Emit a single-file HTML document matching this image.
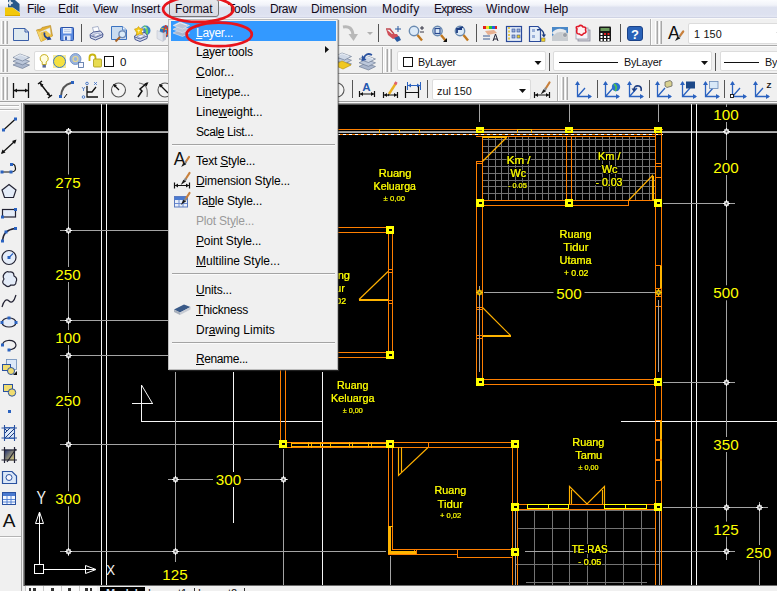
<!DOCTYPE html>
<html><head><meta charset="utf-8"><title>AutoCAD - Format menu</title>
<style>
html,body{margin:0;padding:0}
body{width:777px;height:591px;overflow:hidden;position:relative;background:#f0f0f0;font-family:"Liberation Sans",sans-serif;font-size:12px;color:#000}
svg{position:absolute;left:0;top:0}
svg text{font-family:"Liberation Sans",sans-serif}
#menubar{position:absolute;left:0;top:0;width:777px;height:18px;background:linear-gradient(#fbfcfe 0,#f1f3f9 28%,#dde1ef 42%,#dde1f0 80%,#e4e7f3 94%,#cfd3e4 95%,#cfd3e4 100%);border-bottom:1px solid #fbfbfd}
#menubar span{position:absolute;top:2px;line-height:14px;white-space:nowrap;color:#100818}
#fmt{position:absolute;left:169px;top:-1px;width:48px;height:16px;border:1px solid #777;border-radius:3px;background:linear-gradient(#e6e6ea,#d8d9e2)}
.tb{position:absolute;left:0;width:777px;height:27px;background:#f0f0f0}
.sepline{position:absolute;left:0;width:777px;height:1px}
.combo{position:absolute;height:20px;background:#fff;border:1px solid #dcdcdc;border-radius:2px;box-sizing:border-box}
.combo span{position:absolute;top:3px;line-height:14px;font-size:10.8px;white-space:nowrap;color:#111;letter-spacing:-0.25px}
#menu{position:absolute;left:168px;top:19px;width:168px;height:349px;background:#f0f0f0;border:1px solid #bdbdbd;box-sizing:content-box;box-shadow:1px 1px 1px rgba(60,60,60,.55)}
#menu div.i{position:absolute;left:27px;height:20px;line-height:20px;white-space:nowrap;color:#000}
#menu div.i.dis{color:#9a9a9a}
#menu div.sep{position:absolute;left:3px;width:163px;height:1px;background:#a4a4a4;border-bottom:1px solid #fbfbfb}
#menu u{text-decoration:underline;text-underline-offset:1px}
#hl{position:absolute;left:2px;top:1px;width:165px;height:20px;background:#3399ff}
#tabs{position:absolute;left:24px;top:585px;width:753px;height:6px;background:#f0f0f0;overflow:hidden;font-size:11px;border-top:1px solid #6a6a6a;box-sizing:border-box}
#tabs i{position:absolute;top:0;width:17px;height:6px;background:#fafafa;border-left:1px solid #c8c8c8}
#tabs b{position:absolute;top:2px;height:4px;background:#333}
#tabs span{position:absolute;top:1px;line-height:12px;color:#111}
#palette{position:absolute;left:0;top:103px;width:21px;height:488px;background:#f0f0f0;border-right:1px solid #a6a6a6}
</style></head>
<body>
<div class="tb" style="top:19px"></div>
<div class="tb" style="top:47px"></div>
<div class="tb" style="top:75px;height:28px"></div>
<div id="palette"></div>
<div id="tabs"><i style="left:1px"></i><i style="left:19px"></i><i style="left:37px"></i><i style="left:55px"></i><b style="left:5px;width:2px"></b><b style="left:9px;width:3px"></b><b style="left:27px;width:3px"></b><b style="left:44px;width:3px"></b><b style="left:61px;width:3px"></b><b style="left:66px;width:2px"></b><b style="left:120px;width:1px"></b><b style="left:170px;width:1px"></b><b style="left:220px;width:1px"></b><span style="left:76px;background:#000;color:#cde;width:45px;height:12px;font-weight:bold">&nbsp;&nbsp;Model</span><span style="left:124px">Layout1</span><span style="left:174px">Layout2</span></div>
<svg width="777" height="591" viewBox="0 0 777 591">
<rect x="24" y="104" width="753" height="481" fill="#000" stroke="none" stroke-width="1" />
<rect x="23" y="103" width="754" height="1" fill="#9a9a9a"/><rect x="23" y="103" width="1" height="483" fill="#8c8c8c"/><rect x="24" y="104" width="753" height="1" fill="#555"/><rect x="24" y="104" width="1" height="482" fill="#555"/>
<clipPath id="cv"><rect x="24" y="104" width="753" height="481"/></clipPath>
<g clip-path="url(#cv)">
<rect x="488" y="137" width="1" height="63" fill="#737373"/>
<rect x="495" y="137" width="1" height="63" fill="#737373"/>
<rect x="501" y="137" width="1" height="63" fill="#737373"/>
<rect x="508" y="137" width="1" height="63" fill="#737373"/>
<rect x="515" y="137" width="1" height="63" fill="#737373"/>
<rect x="522" y="137" width="1" height="63" fill="#737373"/>
<rect x="528" y="137" width="1" height="63" fill="#737373"/>
<rect x="535" y="137" width="1" height="63" fill="#737373"/>
<rect x="542" y="137" width="1" height="63" fill="#737373"/>
<rect x="548" y="137" width="1" height="63" fill="#737373"/>
<rect x="555" y="137" width="1" height="63" fill="#737373"/>
<rect x="562" y="137" width="1" height="63" fill="#737373"/>
<rect x="575" y="137" width="1" height="63" fill="#737373"/>
<rect x="582" y="137" width="1" height="63" fill="#737373"/>
<rect x="589" y="137" width="1" height="63" fill="#737373"/>
<rect x="595" y="137" width="1" height="63" fill="#737373"/>
<rect x="602" y="137" width="1" height="63" fill="#737373"/>
<rect x="609" y="137" width="1" height="63" fill="#737373"/>
<rect x="615" y="137" width="1" height="63" fill="#737373"/>
<rect x="622" y="137" width="1" height="63" fill="#737373"/>
<rect x="629" y="137" width="1" height="63" fill="#737373"/>
<rect x="635" y="137" width="1" height="63" fill="#737373"/>
<rect x="642" y="137" width="1" height="63" fill="#737373"/>
<rect x="649" y="137" width="1" height="63" fill="#737373"/>
<rect x="483" y="139" width="172" height="1" fill="#737373"/>
<rect x="483" y="146" width="172" height="1" fill="#737373"/>
<rect x="483" y="152" width="172" height="1" fill="#737373"/>
<rect x="483" y="159" width="172" height="1" fill="#737373"/>
<rect x="483" y="166" width="172" height="1" fill="#737373"/>
<rect x="483" y="173" width="172" height="1" fill="#737373"/>
<rect x="483" y="180" width="172" height="1" fill="#737373"/>
<rect x="483" y="186" width="172" height="1" fill="#737373"/>
<rect x="483" y="193" width="172" height="1" fill="#737373"/>
<rect x="483" y="200" width="172" height="1" fill="#737373"/>
<rect x="534" y="510" width="1" height="76" fill="#737373"/>
<rect x="552" y="510" width="1" height="76" fill="#737373"/>
<rect x="569" y="510" width="1" height="76" fill="#737373"/>
<rect x="587" y="510" width="1" height="76" fill="#737373"/>
<rect x="605" y="510" width="1" height="76" fill="#737373"/>
<rect x="623" y="510" width="1" height="76" fill="#737373"/>
<rect x="641" y="510" width="1" height="76" fill="#737373"/>
<rect x="518" y="510" width="138" height="1" fill="#737373"/>
<rect x="518" y="528" width="138" height="1" fill="#737373"/>
<rect x="516" y="564" width="143" height="1" fill="#737373"/>
<rect x="526" y="582" width="121" height="1" fill="#737373"/>
<rect x="101" y="104" width="1" height="482" fill="#f6f6f6"/>
<rect x="106" y="104" width="1" height="482" fill="#f6f6f6"/>
<rect x="691" y="104" width="1" height="482" fill="#f6f6f6"/>
<rect x="696" y="104" width="1" height="482" fill="#f6f6f6"/>
<rect x="24" y="131.4" width="753" height="1.3" fill="#fff"/>
<rect x="141" y="421" width="182" height="1" fill="#f6f6f6"/>
<rect x="621" y="421" width="156" height="1" fill="#f6f6f6"/>
<rect x="141" y="385" width="1" height="36" fill="#f6f6f6"/>
<rect x="132" y="403" width="21" height="1" fill="#f6f6f6"/>
<path d="M141.5 385L152.5 403.5" stroke="#f4f4f4" stroke-width="1" fill="none"/>
<rect x="233" y="372" width="1" height="151" fill="#f6f6f6"/>
<rect x="322" y="372" width="1" height="214" fill="#f6f6f6"/>
<rect x="68" y="128" width="1" height="428" fill="#a4a4a4"/>
<rect x="60" y="230" width="270" height="1" fill="#a4a4a4"/>
<rect x="60" y="320" width="270" height="1" fill="#a4a4a4"/>
<rect x="60" y="355" width="270" height="1" fill="#a4a4a4"/>
<rect x="60" y="444" width="220" height="1" fill="#a4a4a4"/>
<rect x="60" y="551" width="326" height="1" fill="#a4a4a4"/>
<rect x="168" y="479" width="120" height="1" fill="#a4a4a4"/>
<rect x="175" y="372" width="1" height="190" fill="#a4a4a4"/>
<rect x="283" y="449" width="1" height="137" fill="#a4a4a4"/>
<rect x="390" y="556" width="1" height="30" fill="#a4a4a4"/>
<rect x="726" y="104" width="1" height="456" fill="#a4a4a4"/>
<rect x="759" y="502" width="1" height="84" fill="#a4a4a4"/>
<rect x="663" y="203" width="72" height="1" fill="#a4a4a4"/>
<rect x="663" y="382" width="72" height="1" fill="#a4a4a4"/>
<rect x="663" y="507" width="105" height="1" fill="#a4a4a4"/>
<rect x="525" y="551" width="210" height="1" fill="#a4a4a4"/>
<rect x="484" y="292" width="171" height="1" fill="#a4a4a4"/>
<rect x="479" y="104" width="1" height="18" fill="#a4a4a4"/>
<rect x="569" y="104" width="1" height="18" fill="#a4a4a4"/>
<rect x="658" y="104" width="1" height="18" fill="#a4a4a4"/>
<rect x="283" y="129" width="380" height="1" fill="#ff7f00"/>
<path d="M283 134.5H663" stroke="#ff7f00" stroke-width="1" shape-rendering="crispEdges"/>
<path d="M283 134.5H663" stroke="#fff" stroke-width="1" stroke-dasharray="3 3" shape-rendering="crispEdges"/>
<rect x="476" y="136" width="180" height="1" fill="#ff7f00"/>
<rect x="379" y="129" width="41" height="1" fill="#ffb400"/>
<rect x="379" y="129" width="1" height="4" fill="#ffb400"/>
<rect x="399" y="129" width="1" height="4" fill="#ffb400"/>
<rect x="419" y="129" width="1" height="4" fill="#ffb400"/>
<rect x="517" y="129" width="1" height="4" fill="#ffb400"/>
<rect x="531" y="129" width="1" height="4" fill="#ffb400"/>
<rect x="517" y="129" width="15" height="1" fill="#ffb400"/>
<rect x="476" y="161" width="1" height="221" fill="#ff7f00"/>
<rect x="482" y="136" width="1" height="246" fill="#ff7f00"/>
<rect x="566" y="136" width="1" height="64" fill="#ff7f00"/>
<rect x="571" y="136" width="1" height="64" fill="#ff7f00"/>
<rect x="655" y="131" width="1" height="455" fill="#ff7f00"/>
<rect x="661" y="131" width="1" height="455" fill="#ff7f00"/>
<rect x="482" y="200" width="173" height="1" fill="#ff7f00"/>
<rect x="482" y="205" width="146" height="1" fill="#ff7f00"/>
<rect x="628" y="200" width="1" height="6" fill="#ff7f00"/>
<rect x="652" y="176" width="2" height="25" fill="#ffb400"/>
<rect x="283" y="227" width="110" height="1" fill="#ff7f00"/>
<rect x="283" y="232" width="110" height="1" fill="#ff7f00"/>
<rect x="388" y="232" width="1" height="120" fill="#ff7f00"/>
<rect x="392" y="232" width="1" height="120" fill="#ff7f00"/>
<rect x="283" y="352" width="110" height="1" fill="#ff7f00"/>
<rect x="283" y="357" width="110" height="1" fill="#ff7f00"/>
<rect x="476" y="379" width="186" height="1" fill="#ff7f00"/>
<rect x="476" y="384" width="186" height="1" fill="#ff7f00"/>
<rect x="280" y="131" width="1" height="311" fill="#ff7f00"/>
<rect x="285" y="131" width="1" height="311" fill="#ff7f00"/>
<rect x="280" y="442" width="238" height="1" fill="#ff7f00"/>
<rect x="280" y="447" width="238" height="1" fill="#ff7f00"/>
<rect x="392" y="447" width="1" height="103" fill="#ff7f00"/>
<rect x="388" y="447" width="1" height="108" fill="#ff7f00"/>
<rect x="512" y="447" width="1" height="139" fill="#ff7f00"/>
<rect x="517" y="447" width="1" height="139" fill="#ff7f00"/>
<rect x="517" y="504" width="139" height="1" fill="#ff7f00"/>
<rect x="517" y="509" width="139" height="1" fill="#ff7f00"/>
<rect x="392" y="549" width="121" height="1" fill="#ff7f00"/>
<rect x="388" y="554" width="70" height="1" fill="#ff7f00"/>
<rect x="457" y="549" width="1" height="9" fill="#ff7f00"/>
<rect x="457" y="557" width="56" height="1" fill="#ff7f00"/>
<rect x="414" y="549" width="1" height="6" fill="#ff7f00"/>
<rect x="416" y="549" width="1" height="6" fill="#ff7f00"/>
<rect x="388" y="551" width="28" height="3" fill="#ffb400"/>
<rect x="388" y="526" width="3" height="28" fill="#ffb400"/>
<rect x="388" y="526" width="5" height="1" fill="#ffb400"/>
<rect x="482" y="335" width="29" height="2" fill="#ffb400"/>
<rect x="359" y="299" width="30" height="2" fill="#ffb400"/>
<rect x="482" y="136" width="25" height="2" fill="#ffb400"/>
<rect x="660" y="265" width="2" height="24" fill="#ffb400"/>
<rect x="660" y="420" width="2" height="61" fill="#ffb400"/>
<rect x="527" y="504" width="42" height="1" fill="#ffff00"/>
<rect x="527" y="508" width="42" height="1" fill="#ffff00"/>
<rect x="604" y="504" width="43" height="1" fill="#ffff00"/>
<rect x="604" y="508" width="43" height="1" fill="#ffff00"/>
<rect x="527" y="504" width="1" height="5" fill="#ffff00"/>
<rect x="548" y="504" width="1" height="5" fill="#ffff00"/>
<rect x="568" y="504" width="1" height="5" fill="#ffff00"/>
<rect x="604" y="504" width="1" height="5" fill="#ffff00"/>
<rect x="625" y="504" width="1" height="5" fill="#ffff00"/>
<rect x="646" y="504" width="1" height="5" fill="#ffff00"/>
<rect x="655" y="163" width="7" height="1" fill="#ff7f00"/>
<rect x="655" y="166" width="7" height="1" fill="#ff7f00"/>
<rect x="655" y="177" width="7" height="1" fill="#ff7f00"/>
<rect x="655" y="265" width="7" height="1" fill="#ff7f00"/>
<rect x="655" y="288" width="7" height="1" fill="#ff7f00"/>
<rect x="655" y="296" width="7" height="1" fill="#ff7f00"/>
<rect x="655" y="306" width="7" height="1" fill="#ff7f00"/>
<rect x="655" y="420" width="7" height="1" fill="#ff7f00"/>
<rect x="655" y="439" width="7" height="1" fill="#ff7f00"/>
<rect x="655" y="440" width="7" height="1" fill="#ff7f00"/>
<rect x="655" y="459" width="7" height="1" fill="#ff7f00"/>
<rect x="655" y="460" width="7" height="1" fill="#ff7f00"/>
<rect x="655" y="480" width="7" height="1" fill="#ff7f00"/>
<rect x="476" y="161" width="7" height="1" fill="#ff7f00"/>
<rect x="476" y="163" width="7" height="1" fill="#ff7f00"/>
<rect x="476" y="307" width="7" height="1" fill="#ff7f00"/>
<rect x="476" y="309" width="7" height="1" fill="#ff7f00"/>
<rect x="476" y="335" width="7" height="1" fill="#ff7f00"/>
<rect x="476" y="338" width="7" height="1" fill="#ff7f00"/>
<rect x="388" y="269" width="5" height="1" fill="#ff7f00"/>
<rect x="388" y="272" width="5" height="1" fill="#ff7f00"/>
<rect x="388" y="300" width="5" height="1" fill="#ff7f00"/>
<rect x="388" y="303" width="5" height="1" fill="#ff7f00"/>
<rect x="291" y="442" width="1" height="6" fill="#ffb400"/>
<rect x="308" y="442" width="1" height="6" fill="#ffb400"/>
<rect x="311" y="442" width="1" height="6" fill="#ffb400"/>
<rect x="320" y="442" width="1" height="6" fill="#ffb400"/>
<rect x="330" y="442" width="1" height="6" fill="#ffb400"/>
<rect x="349" y="442" width="1" height="6" fill="#ffb400"/>
<rect x="352" y="442" width="1" height="6" fill="#ffb400"/>
<rect x="368" y="442" width="1" height="6" fill="#ffb400"/>
<rect x="371" y="442" width="1" height="6" fill="#ffb400"/>
<rect x="386" y="442" width="1" height="6" fill="#ffb400"/>
<rect x="291" y="443" width="95" height="1" fill="#ffb400"/>
<rect x="291" y="446" width="95" height="1" fill="#ffb400"/>
<rect x="428" y="442" width="1" height="6" fill="#ff7f00"/>
<rect x="479" y="286" width="1" height="86" fill="#a4a4a4"/>
<rect x="658" y="300" width="1" height="72" fill="#a4a4a4"/>
<rect x="515" y="510" width="1" height="76" fill="#a4a4a4"/>
<rect x="659" y="510" width="1" height="76" fill="#a4a4a4"/>
</g>
<g clip-path="url(#cv)" fill="none" stroke="#ffb000" stroke-width="1.15">
<path d="M482.5 161.5L506.5 137.5"/>
<path d="M628.5 200.5L652.5 175.5V200.5"/>
<path d="M388 271.5L359 299.5"/>
<path d="M482.5 307.5L510.5 335.5"/>
<path d="M398.5 447V475.5L428 447.5M401.5 447V472"/>
<path d="M569.5 504V486.5L587 504L604.5 486.5V504M571.5 504V490M602.5 504V490"/>
</g>
<path d="M65 131.5H72M68.5 128V135" stroke="#fff" stroke-width="1.2"/>
<rect x="66.9" y="129.9" width="3.2" height="3.2" fill="#555" stroke="#fff" stroke-width="1.3"/>
<path d="M65 230.5H72M68.5 227V234" stroke="#fff" stroke-width="1.2"/>
<rect x="66.9" y="228.9" width="3.2" height="3.2" fill="#555" stroke="#fff" stroke-width="1.3"/>
<path d="M65 320.5H72M68.5 317V324" stroke="#fff" stroke-width="1.2"/>
<rect x="66.9" y="318.9" width="3.2" height="3.2" fill="#555" stroke="#fff" stroke-width="1.3"/>
<path d="M65 355.5H72M68.5 352V359" stroke="#fff" stroke-width="1.2"/>
<rect x="66.9" y="353.9" width="3.2" height="3.2" fill="#555" stroke="#fff" stroke-width="1.3"/>
<path d="M65 444.5H72M68.5 441V448" stroke="#fff" stroke-width="1.2"/>
<rect x="66.9" y="442.9" width="3.2" height="3.2" fill="#555" stroke="#fff" stroke-width="1.3"/>
<path d="M65 551.5H72M68.5 548V555" stroke="#fff" stroke-width="1.2"/>
<rect x="66.9" y="549.9" width="3.2" height="3.2" fill="#555" stroke="#fff" stroke-width="1.3"/>
<path d="M723 131.5H730M726.5 128V135" stroke="#fff" stroke-width="1.2"/>
<rect x="724.9" y="129.9" width="3.2" height="3.2" fill="#555" stroke="#fff" stroke-width="1.3"/>
<path d="M723 203.5H730M726.5 200V207" stroke="#fff" stroke-width="1.2"/>
<rect x="724.9" y="201.9" width="3.2" height="3.2" fill="#555" stroke="#fff" stroke-width="1.3"/>
<path d="M723 382.5H730M726.5 379V386" stroke="#fff" stroke-width="1.2"/>
<rect x="724.9" y="380.9" width="3.2" height="3.2" fill="#555" stroke="#fff" stroke-width="1.3"/>
<path d="M723 507.5H730M726.5 504V511" stroke="#fff" stroke-width="1.2"/>
<rect x="724.9" y="505.9" width="3.2" height="3.2" fill="#555" stroke="#fff" stroke-width="1.3"/>
<path d="M723 551.5H730M726.5 548V555" stroke="#fff" stroke-width="1.2"/>
<rect x="724.9" y="549.9" width="3.2" height="3.2" fill="#555" stroke="#fff" stroke-width="1.3"/>
<path d="M756 507.5H763M759.5 504V511" stroke="#fff" stroke-width="1.2"/>
<rect x="757.9" y="505.9" width="3.2" height="3.2" fill="#555" stroke="#fff" stroke-width="1.3"/>
<path d="M172 479.5H179M175.5 476V483" stroke="#fff" stroke-width="1.2"/>
<rect x="173.9" y="477.9" width="3.2" height="3.2" fill="#555" stroke="#fff" stroke-width="1.3"/>
<path d="M280 479.5H287M283.5 476V483" stroke="#fff" stroke-width="1.2"/>
<rect x="281.9" y="477.9" width="3.2" height="3.2" fill="#555" stroke="#fff" stroke-width="1.3"/>
<path d="M172 551.5H179M175.5 548V555" stroke="#fff" stroke-width="1.2"/>
<rect x="173.9" y="549.9" width="3.2" height="3.2" fill="#555" stroke="#fff" stroke-width="1.3"/>
<path d="M476 292.5H483M479.5 289V296" stroke="#ffd000" stroke-width="1.2"/>
<rect x="477.9" y="290.9" width="3.2" height="3.2" fill="#555" stroke="#ffd000" stroke-width="1.3"/>
<path d="M655 292.5H662M658.5 289V296" stroke="#ffd000" stroke-width="1.2"/>
<rect x="656.9" y="290.9" width="3.2" height="3.2" fill="#555" stroke="#ffd000" stroke-width="1.3"/>
<g clip-path="url(#cv)">
<rect x="476" y="199" width="8" height="8" fill="#ffff00"/><rect x="479" y="202" width="3" height="2" fill="#000"/>
<rect x="565" y="199" width="8" height="8" fill="#ffff00"/><rect x="568" y="202" width="3" height="2" fill="#000"/>
<rect x="654" y="199" width="8" height="8" fill="#ffff00"/><rect x="657" y="202" width="3" height="2" fill="#000"/>
<rect x="386" y="226" width="8" height="8" fill="#ffff00"/><rect x="389" y="229" width="3" height="2" fill="#000"/>
<rect x="386" y="351" width="8" height="8" fill="#ffff00"/><rect x="389" y="354" width="3" height="2" fill="#000"/>
<rect x="476" y="378" width="8" height="8" fill="#ffff00"/><rect x="479" y="381" width="3" height="2" fill="#000"/>
<rect x="654" y="378" width="8" height="8" fill="#ffff00"/><rect x="657" y="381" width="3" height="2" fill="#000"/>
<rect x="279" y="440" width="8" height="8" fill="#ffff00"/><rect x="282" y="443" width="3" height="2" fill="#000"/>
<rect x="386" y="440" width="8" height="8" fill="#ffff00"/><rect x="389" y="443" width="3" height="2" fill="#000"/>
<rect x="511" y="440" width="8" height="8" fill="#ffff00"/><rect x="514" y="443" width="3" height="2" fill="#000"/>
<rect x="511" y="503" width="8" height="8" fill="#ffff00"/><rect x="514" y="506" width="3" height="2" fill="#000"/>
<rect x="654" y="503" width="8" height="8" fill="#ffff00"/><rect x="657" y="506" width="3" height="2" fill="#000"/>
<rect x="511" y="548" width="8" height="8" fill="#ffff00"/><rect x="514" y="551" width="3" height="2" fill="#000"/>
<rect x="476" y="127" width="8" height="6" fill="#ffff00"/><rect x="478" y="130" width="4" height="1" fill="#8a6a20"/>
<rect x="565" y="127" width="8" height="6" fill="#ffff00"/><rect x="567" y="130" width="4" height="1" fill="#8a6a20"/>
<rect x="654" y="127" width="8" height="6" fill="#ffff00"/><rect x="656" y="130" width="4" height="1" fill="#8a6a20"/>
</g>
<rect x="52.5" y="174.5" width="31" height="15" fill="#000" stroke="none" stroke-width="1" />
<text x="68" y="187.5" font-size="15.2" fill="#ffff00" text-anchor="middle">275</text>
<rect x="52.5" y="267" width="31" height="15" fill="#000" stroke="none" stroke-width="1" />
<text x="68" y="280" font-size="15.2" fill="#ffff00" text-anchor="middle">250</text>
<rect x="52.5" y="330" width="31" height="15" fill="#000" stroke="none" stroke-width="1" />
<text x="68" y="343" font-size="15.2" fill="#ffff00" text-anchor="middle">100</text>
<rect x="52.5" y="393" width="31" height="15" fill="#000" stroke="none" stroke-width="1" />
<text x="68" y="406" font-size="15.2" fill="#ffff00" text-anchor="middle">250</text>
<rect x="52.5" y="491.3" width="31" height="15" fill="#000" stroke="none" stroke-width="1" />
<text x="68" y="504.3" font-size="15.2" fill="#ffff00" text-anchor="middle">300</text>
<rect x="213.0" y="472" width="31" height="15" fill="#000" stroke="none" stroke-width="1" />
<text x="228.5" y="485" font-size="15.2" fill="#ffff00" text-anchor="middle">300</text>
<rect x="159.5" y="567" width="31" height="15" fill="#000" stroke="none" stroke-width="1" />
<text x="175" y="580" font-size="15.2" fill="#ffff00" text-anchor="middle">125</text>
<rect x="710.5" y="107" width="31" height="15" fill="#000" stroke="none" stroke-width="1" />
<text x="726" y="120" font-size="15.2" fill="#ffff00" text-anchor="middle">100</text>
<rect x="710.5" y="160" width="31" height="15" fill="#000" stroke="none" stroke-width="1" />
<text x="726" y="173" font-size="15.2" fill="#ffff00" text-anchor="middle">200</text>
<rect x="710.5" y="285.3" width="31" height="15" fill="#000" stroke="none" stroke-width="1" />
<text x="726" y="298.3" font-size="15.2" fill="#ffff00" text-anchor="middle">500</text>
<rect x="710.5" y="437" width="31" height="15" fill="#000" stroke="none" stroke-width="1" />
<text x="726" y="450" font-size="15.2" fill="#ffff00" text-anchor="middle">350</text>
<rect x="710.5" y="521.6" width="31" height="15" fill="#000" stroke="none" stroke-width="1" />
<text x="726" y="534.6" font-size="15.2" fill="#ffff00" text-anchor="middle">125</text>
<rect x="743.0" y="545" width="31" height="15" fill="#000" stroke="none" stroke-width="1" />
<text x="758.5" y="558" font-size="15.2" fill="#ffff00" text-anchor="middle">250</text>
<rect x="553.5" y="285.5" width="31" height="15" fill="#000" stroke="none" stroke-width="1" />
<text x="569" y="298.5" font-size="15.2" fill="#ffff00" text-anchor="middle">500</text>
<filter id="halo" x="-5%" y="-5%" width="110%" height="110%"><feMorphology in="SourceAlpha" operator="dilate" radius="1" result="d"/><feFlood flood-color="#000"/><feComposite in2="d" operator="in" result="h"/><feMerge><feMergeNode in="h"/><feMergeNode in="SourceGraphic"/></feMerge></filter>
<g clip-path="url(#cv)">
<g filter="url(#halo)">
<text x="378.7" y="177.3" font-size="10.8" fill="#fcfc00" textLength="32.8" lengthAdjust="spacingAndGlyphs">Ruang</text>
<text x="373.6" y="189.8" font-size="10.8" fill="#fcfc00" textLength="42.3" lengthAdjust="spacingAndGlyphs">Keluarga</text>
<text x="383.6" y="200.8" font-size="7.6" fill="#fcfc00" textLength="21.6" lengthAdjust="spacingAndGlyphs">± 0,00</text>
<text x="506.7" y="164.2" font-size="10.8" fill="#fcfc00" textLength="23.8" lengthAdjust="spacingAndGlyphs">Km /</text>
<text x="510.5" y="177.2" font-size="10.8" fill="#fcfc00" textLength="15.5" lengthAdjust="spacingAndGlyphs">Wc</text>
<text x="508" y="188" font-size="7.3" fill="#fcfc00" textLength="18.8" lengthAdjust="spacingAndGlyphs">- 0.05</text>
<text x="598" y="160" font-size="10.8" fill="#fcfc00" textLength="22.5" lengthAdjust="spacingAndGlyphs">Km /</text>
<text x="601.7" y="173" font-size="10.8" fill="#fcfc00" textLength="15.8" lengthAdjust="spacingAndGlyphs">Wc</text>
<text x="595.5" y="186" font-size="10.2" fill="#fcfc00" textLength="27.0" lengthAdjust="spacingAndGlyphs">- 0.03</text>
<text x="559.5" y="238.3" font-size="10.8" fill="#fcfc00" textLength="32.2" lengthAdjust="spacingAndGlyphs">Ruang</text>
<text x="563.2" y="250.8" font-size="10.8" fill="#fcfc00" textLength="25.2" lengthAdjust="spacingAndGlyphs">Tidur</text>
<text x="559.5" y="264" font-size="10.8" fill="#fcfc00" textLength="32.2" lengthAdjust="spacingAndGlyphs">Utama</text>
<text x="563.8" y="276" font-size="8.8" fill="#fcfc00" textLength="24.6" lengthAdjust="spacingAndGlyphs">+ 0.02</text>
<text x="317.5" y="279" font-size="10.8" fill="#fcfc00" textLength="32.5" lengthAdjust="spacingAndGlyphs">Ruang</text>
<text x="320" y="291.5" font-size="10.8" fill="#fcfc00" textLength="25" lengthAdjust="spacingAndGlyphs">Tidur</text>
<text x="321.5" y="304" font-size="8.8" fill="#fcfc00" textLength="24.5" lengthAdjust="spacingAndGlyphs">+ 0.02</text>
<text x="337" y="389" font-size="10.8" fill="#fcfc00" textLength="31.5" lengthAdjust="spacingAndGlyphs">Ruang</text>
<text x="331" y="401.7" font-size="10.8" fill="#fcfc00" textLength="43.5" lengthAdjust="spacingAndGlyphs">Keluarga</text>
<text x="342.7" y="412.7" font-size="7.3" fill="#fcfc00" textLength="20.0" lengthAdjust="spacingAndGlyphs">± 0,00</text>
<text x="434.5" y="494.2" font-size="10.8" fill="#fcfc00" textLength="31.7" lengthAdjust="spacingAndGlyphs">Ruang</text>
<text x="437.5" y="507.5" font-size="10.8" fill="#fcfc00" textLength="25.5" lengthAdjust="spacingAndGlyphs">Tidur</text>
<text x="440" y="518" font-size="7.5" fill="#fcfc00" textLength="21.2" lengthAdjust="spacingAndGlyphs">+ 0,02</text>
<text x="572.3" y="445.8" font-size="10.8" fill="#fcfc00" textLength="32.1" lengthAdjust="spacingAndGlyphs">Ruang</text>
<text x="575.2" y="459.4" font-size="10.8" fill="#fcfc00" textLength="27.1" lengthAdjust="spacingAndGlyphs">Tamu</text>
<text x="578.6" y="469.8" font-size="7.3" fill="#fcfc00" textLength="19.9" lengthAdjust="spacingAndGlyphs">± 0,00</text>
<text x="571.7" y="553" font-size="10.8" fill="#fcfc00" textLength="36.1" lengthAdjust="spacingAndGlyphs">TE RAS</text>
<text x="578.3" y="565" font-size="9" fill="#fcfc00" textLength="23.0" lengthAdjust="spacingAndGlyphs">- 0.05</text>
</g>
</g>
<g fill="none" stroke="#fff" stroke-width="1" shape-rendering="crispEdges">
<rect x="34.5" y="564.5" width="9" height="9"/>
<path d="M39.5 564V513M44 569.5H95"/>
</g>
<g fill="none" stroke="#fff" stroke-width="1">
<path d="M39.5 512L35.5 523.5H43.5Z"/>
<path d="M96 569.5L85.5 565.5V573.5Z"/>
</g>
<text x="36.5" y="504" font-size="17.5" fill="#f4f4f4" textLength="9.5" lengthAdjust="spacingAndGlyphs">Y</text>
<text x="106.3" y="575" font-size="14.8" fill="#f4f4f4" textLength="8.8" lengthAdjust="spacingAndGlyphs">X</text>
</svg>
<div id="menubar"><div id="fmt"></div><span style="left:27px;letter-spacing:-0.3px">File</span><span style="left:58px;letter-spacing:0px">Edit</span><span style="left:93px;letter-spacing:-0.3px">View</span><span style="left:131px;letter-spacing:-0.15px">Insert</span><span style="left:175px;letter-spacing:-0.1px">Format</span><span style="left:228px;letter-spacing:-0.1px">Tools</span><span style="left:270px;letter-spacing:-0.4px">Draw</span><span style="left:311px;letter-spacing:-0.1px">Dimension</span><span style="left:382px;letter-spacing:0.4px">Modify</span><span style="left:434px;letter-spacing:-0.8px">Express</span><span style="left:486px;letter-spacing:0.15px">Window</span><span style="left:544px;letter-spacing:-0.15px">Help</span></div>
<div class="combo" style="left:34px;top:51px;width:200px"><span style="left:85px;font-size:11.5px;top:3px">0</span></div>
<div class="combo" style="left:397px;top:51px;width:149px"><span style="left:20px">ByLayer</span></div>
<div class="combo" style="left:553px;top:51px;width:159px"><span style="left:70px">ByLayer</span></div>
<div class="combo" style="left:720px;top:51px;width:70px"><span style="left:44px">ByLayer</span></div>
<div class="combo" style="left:688px;top:23px;width:100px;height:21px"><span style="left:5px;top:3px;letter-spacing:0.2px">1 150</span></div>
<div class="combo" style="left:432px;top:79px;width:99px;height:21px"><span style="left:4px;top:4px;letter-spacing:0">zul 150</span></div>
<svg width="777" height="591" viewBox="0 0 777 591">
<g shape-rendering="crispEdges">
<rect x="0" y="18" width="777" height="1" fill="#fafafa"/>
<rect x="0" y="45" width="777" height="1" fill="#a8a8a8"/><rect x="0" y="46" width="777" height="1" fill="#fbfbfb"/>
<rect x="0" y="73" width="777" height="1" fill="#a8a8a8"/><rect x="0" y="74" width="777" height="1" fill="#fbfbfb"/>
<rect x="0" y="101" width="777" height="1" fill="#a0a0a0"/><rect x="0" y="102" width="777" height="1" fill="#f8f8f8"/>
<rect x="1" y="21" width="1" height="23" fill="#fff"/><rect x="2" y="21" width="1" height="23" fill="#d0d0d0"/><rect x="3" y="21" width="1" height="23" fill="#a8a8a8"/>
<rect x="5" y="21" width="1" height="23" fill="#fff"/><rect x="6" y="21" width="1" height="23" fill="#d0d0d0"/><rect x="7" y="21" width="1" height="23" fill="#a8a8a8"/>
<rect x="1" y="49" width="1" height="23" fill="#fff"/><rect x="2" y="49" width="1" height="23" fill="#d0d0d0"/><rect x="3" y="49" width="1" height="23" fill="#a8a8a8"/>
<rect x="5" y="49" width="1" height="23" fill="#fff"/><rect x="6" y="49" width="1" height="23" fill="#d0d0d0"/><rect x="7" y="49" width="1" height="23" fill="#a8a8a8"/>
<rect x="1" y="77" width="1" height="23" fill="#fff"/><rect x="2" y="77" width="1" height="23" fill="#d0d0d0"/><rect x="3" y="77" width="1" height="23" fill="#a8a8a8"/>
<rect x="5" y="77" width="1" height="23" fill="#fff"/><rect x="6" y="77" width="1" height="23" fill="#d0d0d0"/><rect x="7" y="77" width="1" height="23" fill="#a8a8a8"/>
<rect x="655" y="21" width="1" height="23" fill="#fff"/><rect x="656" y="21" width="1" height="23" fill="#d0d0d0"/><rect x="657" y="21" width="1" height="23" fill="#a8a8a8"/>
<rect x="659" y="21" width="1" height="23" fill="#fff"/><rect x="660" y="21" width="1" height="23" fill="#d0d0d0"/><rect x="661" y="21" width="1" height="23" fill="#a8a8a8"/>
<rect x="385" y="49" width="1" height="23" fill="#fff"/><rect x="386" y="49" width="1" height="23" fill="#d0d0d0"/><rect x="387" y="49" width="1" height="23" fill="#a8a8a8"/>
<rect x="389" y="49" width="1" height="23" fill="#fff"/><rect x="390" y="49" width="1" height="23" fill="#d0d0d0"/><rect x="391" y="49" width="1" height="23" fill="#a8a8a8"/>
<rect x="561" y="77" width="1" height="23" fill="#fff"/><rect x="562" y="77" width="1" height="23" fill="#d0d0d0"/><rect x="563" y="77" width="1" height="23" fill="#a8a8a8"/>
<rect x="565" y="77" width="1" height="23" fill="#fff"/><rect x="566" y="77" width="1" height="23" fill="#d0d0d0"/><rect x="567" y="77" width="1" height="23" fill="#a8a8a8"/>
<rect x="650" y="19" width="1" height="26" fill="#b0b0b0"/><rect x="651" y="19" width="1" height="26" fill="#fdfdfd"/>
<rect x="382" y="47" width="1" height="26" fill="#b0b0b0"/><rect x="383" y="47" width="1" height="26" fill="#fdfdfd"/>
<rect x="557" y="75" width="1" height="26" fill="#b0b0b0"/><rect x="558" y="75" width="1" height="26" fill="#fdfdfd"/>
<rect x="81" y="24" width="1" height="18" fill="#555"/>
<rect x="378" y="24" width="1" height="18" fill="#555"/>
<rect x="476" y="24" width="1" height="18" fill="#555"/>
<rect x="620" y="24" width="1" height="18" fill="#555"/>
<rect x="103" y="80" width="1" height="18" fill="#555"/>
<rect x="352" y="80" width="1" height="18" fill="#555"/>
<rect x="427" y="80" width="1" height="18" fill="#555"/>
<rect x="597" y="80" width="1" height="18" fill="#555"/>
<rect x="649" y="80" width="1" height="18" fill="#555"/>
<rect x="724" y="80" width="1" height="18" fill="#555"/>
<rect x="549" y="53" width="1" height="18" fill="#555"/>
<rect x="715" y="53" width="1" height="18" fill="#555"/>
</g>
<path d="M534.5 61H541.5L538 65Z" fill="#111"/>
<path d="M701.0 61H708.0L704.5 65Z" fill="#111"/>
<path d="M519.0 89H526.0L522.5 93Z" fill="#111"/>
<path d="M776.5 32H783.5L780 36Z" fill="#111"/>
<rect x="403.5" y="57.5" width="9" height="9" fill="#fff" stroke="#111"/>
<rect x="104.5" y="56.5" width="9" height="10" fill="#fff" stroke="#111"/>
<path d="M559 62.5H618M724 62.5H759" stroke="#111" stroke-width="1" shape-rendering="crispEdges"/>
<path d="M8 0H15L19.5 4V12L13 7.5H8Z" fill="#2a5a8a"/><path d="M5 7.5L12.500 7.500L20 13V16H5Z" fill="#f2c80c"/><path d="M5 15H20V16H5Z" fill="#d8a800"/><path d="M10 0V6M7 3H13" stroke="#fff" stroke-width="1"/><circle cx="10" cy="3" r="1.5" fill="none" stroke="#fff" stroke-width="0.7"/>
<path d="M13.5 28.5H25L28.5 32V40.5H13.5Z" fill="#dfeaf0" stroke="#3a5fa8"/><path d="M25 28.5V32H28.5" fill="none" stroke="#3a5fa8"/>
<path d="M36.5 30L41 29L42 27.5L50.5 25.5L52.5 36L41 41.5Z" fill="#e4b030" stroke="#b88a28" stroke-width="0.7"/><path d="M39.5 32L50 27.5L51 35L42 39.5Z" fill="#f0f4fa" stroke="#c8b070" stroke-width="0.4"/><path d="M36.5 30L40.5 32.5L42.5 41L41 41.5Z" fill="#f4d468"/><path d="M40.5 32.5L46 30.5L52.5 36L42.5 41Z" fill="#ecc040" opacity="0.9"/><path d="M44.5 32.5Q43.5 37.5 49 38.5" stroke="#1c3f90" stroke-width="1.7" fill="none"/><path d="M51.5 39.5L46.8 40.2L49 36Z" fill="#1c3f90"/>
<rect x="60.5" y="27.5" width="13" height="13" rx="0.8" fill="#5a8ae0" stroke="#2a52a8"/><rect x="63" y="28" width="8.5" height="5.5" fill="#eaf0fa"/><path d="M64 29.7H70.5M64 31.5H70.5" stroke="#a8bce0" stroke-width="0.7"/><rect x="63.5" y="35.5" width="7" height="5" fill="#dfe8f8"/><rect x="65" y="36.5" width="2" height="3.5" fill="#3a62b8"/>
<path d="M92.5 27.5L98.0 26.5L99.5 31.5L94.0 33.0Z" fill="#fdfdff" stroke="#8a96b8" stroke-width="0.700"/>
<path d="M90.0 34.5L93.5 32.0L100.5 31.0L103.0 34.0L102.5 37.0L95.5 40.0L90.5 38.0Z" fill="#d4daec" stroke="#3a4a88" stroke-width="0.900"/>
<path d="M90.5 35.5L95.5 37.5L102.5 34.5" fill="none" stroke="#3a4a88" stroke-width="0.800"/>
<path d="M92.5 35.0L96.0 36.3L100.5 34.3L97.5 33.3Z" fill="#f8f9ff" stroke="#6a78a8" stroke-width="0.500"/>
<path d="M111.500 26.500H122.500L126.500 30V39.500H111.500Z" fill="#cadcf0" stroke="#3a72c0"/><path d="M122.500 26.500V30H126.500" fill="#eef4fc" stroke="#3a72c0" stroke-width="0.800"/><circle cx="122.300" cy="34.200" r="3.400" fill="#dcecf8" stroke="#6a8ab8" stroke-width="1.300"/><path d="M120 37L115.500 41.500" stroke="#a86428" stroke-width="1.900"/>
<circle cx="145.500" cy="30.500" r="5" fill="#3a86c8"/><path d="M144 26Q149 30 146 35.500" stroke="#6ad060" stroke-width="2.200" fill="none"/><path d="M142 28.500Q144.500 27 146.500 28" stroke="#e8f4ff" stroke-width="1" fill="none"/>
<path d="M137 29L142.5 28L144 33L138.5 34.5Z" fill="#fdfdff" stroke="#8a96b8" stroke-width="0.700"/>
<path d="M134.5 36L138 33.5L145 32.5L147.5 35.5L147 38.5L140 41.5L135 39.5Z" fill="#d4daec" stroke="#3a4a88" stroke-width="0.900"/>
<path d="M135 37L140 39L147 36" fill="none" stroke="#3a4a88" stroke-width="0.800"/>
<path d="M137 36.5L140.5 37.8L145 35.8L142 34.8Z" fill="#f8f9ff" stroke="#6a78a8" stroke-width="0.500"/>
<path d="M134.500 29L137 28.500L138.500 26.500L140 28.500L143 29L141.500 31.500L142.500 34.500L139.500 34L136.500 35.500L136.500 32.500Z" fill="#f4c814" stroke="#c89808" stroke-width="0.600"/><path d="M137.500 30.500H140M138.700 29.500V32.500" stroke="#fff8c0" stroke-width="0.800"/>
<circle cx="165.700" cy="31.300" r="6" fill="#2a78c0"/><path d="M161 28Q166 31 171 28M160 33Q166 36 171.500 33" stroke="#f0d020" stroke-width="0.900" fill="none"/><path d="M165.700 25.300Q162 31 165.700 37.300M165.700 25.300Q170 31 165.700 37.300" stroke="#e03020" stroke-width="1.100" fill="none"/><path d="M157 30.500L163 33V41.500L157 38.500Z" fill="#e0e4ec" stroke="#b8bcc8" stroke-width="0.500"/><path d="M163 33L166 31.500V39.500L163 41.500Z" fill="#c0c6d4"/>
<path d="M343 27Q352 25 353 35" stroke="#b8b8b8" stroke-width="3" fill="none"/><path d="M348.500 34H358L353.500 41Z" fill="#b8b8b8"/>
<path d="M367 32H373L370 35Z" fill="#b0b0b0"/>
<path d="M386 29L392 34L397 34L399 37L393 39L388 35Z" fill="#d0505a"/><path d="M386 29L390 29L394 34" fill="none" stroke="#c04850" stroke-width="1.500"/><path d="M394 38L399 36L401 40L397 42Z" fill="#2a5aa0"/><path d="M398 26V32M395 29H401" stroke="#2a5aa0" stroke-width="1"/>
<circle cx="414" cy="31" r="4.700" fill="#dceaf8" stroke="#6a8ab0" stroke-width="1.400"/><path d="M417.5 35L422 40.5" stroke="#c07820" stroke-width="2.400"/>
<path d="M420 28H424M422 26V30M420 32H424" stroke="#223" stroke-width="0.900"/>
<circle cx="437.5" cy="31" r="4.700" fill="#dceaf8" stroke="#6a8ab0" stroke-width="1.400"/><path d="M441.0 35L445.5 40.5" stroke="#c07820" stroke-width="2.400"/>
<rect x="435" y="28.500" width="5" height="5" fill="none" stroke="#2a4a90" stroke-width="1.200"/><path d="M447 38V42H443Z" fill="#111"/>
<circle cx="460" cy="31" r="4.700" fill="#dceaf8" stroke="#6a8ab0" stroke-width="1.400"/><path d="M463.5 35L468 40.5" stroke="#c07820" stroke-width="2.400"/>
<path d="M457 33V29H462M457 29L463 27" stroke="#1c3c80" stroke-width="1.800" fill="none"/>
<rect x="483" y="26" width="14" height="3" fill="#e02020"/><rect x="486" y="26" width="3" height="3" fill="#f0e020"/><rect x="489" y="26" width="3" height="3" fill="#20c040"/><rect x="492" y="26" width="3" height="3" fill="#2060e0"/><path d="M485 31L494 30L497 33L488 35Z" fill="#e8b090"/><path d="M483 36H490M483 39H490" stroke="#3a5a90" stroke-width="1.200"/><path d="M493 41L495.500 34L498 41M494 39H497" stroke="#223" stroke-width="1" fill="none"/>
<rect x="506.500" y="26.500" width="15" height="15" fill="#e6eef8" stroke="#2a4a9a" stroke-width="1.200"/><path d="M509 27V41" stroke="#e8c020" stroke-width="1.500" stroke-dasharray="2 1.500"/><rect x="512" y="29" width="3" height="3" fill="#9ab0d8" stroke="#2a4a9a" stroke-width="0.600"/><rect x="517" y="29" width="3" height="3" fill="#9ab0d8" stroke="#2a4a9a" stroke-width="0.600"/><rect x="512" y="35" width="3" height="3" fill="#9ab0d8" stroke="#2a4a9a" stroke-width="0.600"/><rect x="517" y="35" width="3" height="3" fill="#f0d020" stroke="#2a4a9a" stroke-width="0.600"/>
<path d="M529.500 26.500H538L540.500 29V41.500H529.500Z" fill="#e6eef8" stroke="#2a4a9a" stroke-width="1.200"/><rect x="532" y="29" width="3" height="3" fill="#9ab0d8"/><rect x="532" y="35" width="3" height="3" fill="#9ab0d8"/><path d="M537 30Q543 28 544 35" stroke="#1c3c80" stroke-width="1.400" fill="none"/><path d="M541.500 34.500H546L544 37.500Z" fill="#1c3c80"/><rect x="541.500" y="38" width="3.500" height="3.500" fill="#f0d020" stroke="#665" stroke-width="0.500"/>
<rect x="552" y="27" width="16" height="14" fill="#4a88c8"/><path d="M552 36L559 31L568 33V41H552Z" fill="#c8ccd0"/><path d="M553 34Q558 28 566 32" stroke="#e8eaec" stroke-width="3" fill="none"/><circle cx="565" cy="35" r="2.500" fill="#9aa0a8" stroke="#e0e0e0" stroke-width="0.800"/>
<rect x="578" y="30" width="12" height="11" fill="#d0d0d8" stroke="#889" stroke-width="0.800"/><rect x="576" y="28" width="12" height="11" fill="#f4f4f8" stroke="#99a" stroke-width="0.800"/><path d="M577 29Q575 26 578.500 26.500Q581 24 583 27Q586.500 26.500 585.500 30Q587 33 583.500 33.500Q582 36.500 579.500 34Q575.500 34.500 577 29Z" fill="#fff0f0" stroke="#e01828" stroke-width="1.600"/>
<rect x="599" y="26.500" width="12" height="15" rx="1" fill="#181818"/><rect x="600.500" y="28" width="9" height="3" fill="#6a9a5a"/><g fill="#fff"><rect x="600.500" y="33" width="2" height="2"/><rect x="604" y="33" width="2" height="2" fill="#e02020"/><rect x="607.500" y="33" width="2" height="2" fill="#e02020"/><rect x="600.500" y="36" width="2" height="2"/><rect x="604" y="36" width="2" height="2"/><rect x="607.500" y="36" width="2" height="2"/><rect x="600.500" y="39" width="2" height="2"/><rect x="604" y="39" width="2" height="2"/><rect x="607.500" y="39" width="2" height="2"/></g>
<rect x="627.500" y="26.500" width="15" height="14" rx="2.500" fill="#2a62b8" stroke="#1a4288"/><text x="635" y="38.500" font-size="13" font-weight="bold" fill="#fff" text-anchor="middle">?</text>
<text x="673.800" y="39" font-size="17.500" fill="#111" text-anchor="middle">A</text>
<path d="M683.2 31.5L680 35.8" stroke="#c8803c" stroke-width="2.200" stroke-linecap="round"/>
<path d="M680 35.8L678.9 37.3" stroke="#8a8a8a" stroke-width="2.400"/>
<path d="M677.5 36.6L680.3 38.3L675.0 41.0Z" fill="#1a1a1a"/>
<path d="M13 65.0L20 61.5L29.5 65.0L22.5 68.5Z" fill="#aab6cc" stroke="#62708c" stroke-width="0.600"/>
<path d="M13 61.3L20 57.8L29.5 61.3L22.5 64.8Z" fill="#bcc7da" stroke="#62708c" stroke-width="0.600"/>
<path d="M13 57.5L20 54L29.5 57.5L22.5 61Z" fill="#cfd8e6" stroke="#62708c" stroke-width="0.600"/>
<path d="M14.5 57.4L20 54.7L27 57.2" fill="none" stroke="#f4f7fb" stroke-width="0.800"/>
<path d="M44.200 54.500A4 4 0 0 1 46.200 62V64.500H42.200V62A4 4 0 0 1 44.200 54.500Z" fill="#fffde0" stroke="#c8b020" stroke-width="1"/><rect x="42.500" y="64.800" width="3.400" height="2.800" fill="#5a6a9a"/>
<rect x="53" y="55" width="13" height="13" fill="#f0e060" opacity="0.600"/><circle cx="59.500" cy="61.500" r="6" fill="#f4e040" stroke="#3a78c8" stroke-width="1"/>
<circle cx="75.500" cy="59" r="5.500" fill="#9ab4dc" stroke="#6a8ac0" stroke-width="0.800"/><circle cx="75.500" cy="59" r="2.500" fill="none" stroke="#e8d890" stroke-width="1.200"/><rect x="78.500" y="62.500" width="5" height="5" fill="#f8f8ff" stroke="#4a6aa0" stroke-width="0.800"/>
<path d="M89.500 61V57.500Q89.500 54.500 92.500 54.500Q95.500 54.500 95.500 57.500V59" fill="none" stroke="#c8b410" stroke-width="1.800"/><rect x="93.500" y="59" width="8" height="8" rx="1" fill="#e8dc50" stroke="#a89810" stroke-width="0.800"/>
<path d="M335 64.0L342 60.5L351.5 64.0L344.5 67.5Z" fill="#aab6cc" stroke="#62708c" stroke-width="0.600"/>
<path d="M335 60.3L342 56.8L351.5 60.3L344.5 63.8Z" fill="#bcc7da" stroke="#62708c" stroke-width="0.600"/>
<path d="M335 56.5L342 53L351.5 56.5L344.5 60Z" fill="#cfd8e6" stroke="#62708c" stroke-width="0.600"/>
<path d="M336.5 56.4L342 53.7L349 56.2" fill="none" stroke="#f4f7fb" stroke-width="0.800"/>
<path d="M334 65L342 61L351 65L343 69Z" fill="#f0c820" stroke="#c09810" stroke-width="0.700"/>
<path d="M359 66.5L366 63.0L375.5 66.5L368.5 70.0Z" fill="#aab6cc" stroke="#62708c" stroke-width="0.600"/>
<path d="M359 62.8L366 59.3L375.5 62.8L368.5 66.3Z" fill="#bcc7da" stroke="#62708c" stroke-width="0.600"/>
<path d="M359 59.0L366 55.5L375.5 59.0L368.5 62.5Z" fill="#cfd8e6" stroke="#62708c" stroke-width="0.600"/>
<path d="M360.5 58.9L366 56.2L373 58.7" fill="none" stroke="#f4f7fb" stroke-width="0.800"/>
<path d="M364 58Q366 52 372 55" stroke="#2a52a0" stroke-width="1.800" fill="none"/><path d="M362 55L366.500 60L361.500 61Z" fill="#2a52a0"/>
<path d="M13.500 83V98M28.500 83V98M14 90.500H28" stroke="#111" stroke-width="1.300" fill="none"/><path d="M14 90.500L17 88.500V92.500ZM28 90.500L25 88.500V92.500Z" fill="#111"/>
<path d="M38 84L42 81M48 98L52 95M40 83L50 96" stroke="#111" stroke-width="1.400" fill="none"/><path d="M40 83L43.500 84.500L41 87ZM50 96L46.500 94.500L49 92Z" fill="#111"/>
<path d="M61 96Q62 85 71 83" stroke="#555" stroke-width="2" fill="none"/><rect x="59" y="95" width="3" height="3" fill="#2a62c0"/><rect x="71" y="81" width="3" height="3" fill="#2a62c0"/><path d="M64 98L67 94" stroke="#111" stroke-width="1"/>
<path d="M87 86V97H98M87 92L92 92L96 87" stroke="#111" stroke-width="1.300" fill="none"/><circle cx="87" cy="83.500" r="1.300" fill="none" stroke="#2a62c0" stroke-width="0.800"/><circle cx="83.500" cy="97" r="1.300" fill="none" stroke="#2a62c0" stroke-width="0.800"/><path d="M94 82L97 85M97 82L94 85M82 87L83.500 89L85 87M83.500 89V91" stroke="#2a62c0" stroke-width="0.700" fill="none"/>
<circle cx="118.5" cy="90" r="7" fill="#f4f4f4" stroke="#555" stroke-width="1.100"/>
<path d="M119 90L114 85" stroke="#111" stroke-width="1.300"/><path d="M113 84L117 85L114.500 87.500Z" fill="#111"/>
<path d="M139 83Q149 84 147 97" stroke="#777" stroke-width="1.100" fill="none"/><path d="M138 97L142 91L140 89L147 83" stroke="#111" stroke-width="1.500" fill="none"/><path d="M148.500 82L146.500 86.500L144 84Z" fill="#111"/>
<circle cx="165" cy="90" r="7" fill="#f4f4f4" stroke="#555" stroke-width="1.100"/>
<path d="M160 85L168 93" stroke="#111" stroke-width="1.300"/><path d="M159 84L163 85L160.500 87.500Z" fill="#111"/>
<circle cx="337" cy="90" r="7" fill="#f4f4f4" stroke="#555" stroke-width="1.100"/>
<text x="366.500" y="91" font-size="11.500" font-weight="bold" fill="#2458b0" text-anchor="middle">A</text>
<path d="M359.5 91V97M374.5 91V97M359 94H375" stroke="#111" stroke-width="1.200" fill="none"/><path d="M360 94L363 92V96ZM374 94L371 92V96Z" fill="#111"/>
<path d="M383.5 92V98M397.5 92V98M383 95H398" stroke="#111" stroke-width="1.200" fill="none"/><path d="M384 95L387 93V97ZM397 95L394 93V97Z" fill="#111"/>
<path d="M396 83L389 94" stroke="#e8b020" stroke-width="2.400"/><path d="M396.500 82L395 84.500" stroke="#e06070" stroke-width="2.600"/><path d="M389 94L388 96" stroke="#222" stroke-width="1.500"/>
<path d="M405.500 86V98M418.500 86V98M406 92.500H418" stroke="#111" stroke-width="1.200" fill="none"/>
<path d="M407.500 82V90M420.500 82V90M408 85.500H420" stroke="#2a62c0" stroke-width="1" fill="none"/><path d="M408 85.500L411 83.500V87.500ZM420 85.500L417 83.500V87.500Z" fill="#2a62c0"/>
<path d="M534.5 92V98M549.5 92V98M534 95H550" stroke="#111" stroke-width="1.200" fill="none"/><path d="M535 95L538 93V97ZM549 95L546 93V97Z" fill="#111"/>
<path d="M549.5 82.5L546 88" stroke="#c8803c" stroke-width="2.200" stroke-linecap="round"/>
<path d="M546 88L544.8 89.9" stroke="#8a8a8a" stroke-width="2.400"/>
<path d="M543.5 89.2L546.2 90.9L540.6 94.5Z" fill="#1a1a1a"/>
<path d="M577.5 82V96.5H591M577.5 96.5L585 88" stroke="#2a62c0" stroke-width="1.300" fill="none"/><path d="M577.5 81L580 85H575ZM592 96.5L588 94V99Z" fill="#2a62c0"/>
<path d="M605.5 82V96.5H619M605.5 96.5L613 88" stroke="#2a62c0" stroke-width="1.300" fill="none"/><path d="M605.5 81L608 85H603ZM620 96.5L616 94V99Z" fill="#2a62c0"/>
<circle cx="616" cy="87" r="4.200" fill="#2a70d0"/><path d="M614 84Q618 87 615 91" stroke="#50c050" stroke-width="1.800" fill="none"/>
<path d="M629.5 82V96.5H643M629.5 96.5L637 88" stroke="#2a62c0" stroke-width="1.300" fill="none"/><path d="M629.5 81L632 85H627ZM644 96.5L640 94V99Z" fill="#2a62c0"/>
<path d="M634 90Q634 85 639 86Q642 87 641 91" stroke="#1c3c80" stroke-width="1.600" fill="none"/><path d="M631.500 88.500L636.500 88.500L634 92Z" fill="#1c3c80"/>
<path d="M657.5 82V96.5H671M657.5 96.5L665 88" stroke="#2a62c0" stroke-width="1.300" fill="none"/><path d="M657.5 81L660 85H655ZM672 96.5L668 94V99Z" fill="#2a62c0"/>
<path d="M665 82L670 80.500L672 82V86L667 87.500L665 86Z" fill="#d8d090" stroke="#555" stroke-width="0.700"/>
<path d="M682.5 82V96.5H696M682.5 96.5L690 88" stroke="#2a62c0" stroke-width="1.300" fill="none"/><path d="M682.5 81L685 85H680ZM697 96.5L693 94V99Z" fill="#2a62c0"/>
<rect x="686" y="81.500" width="9" height="7" fill="#1c4888"/>
<path d="M705.5 82V96.5H719M705.5 96.5L713 88" stroke="#2a62c0" stroke-width="1.300" fill="none"/><path d="M705.5 81L708 85H703ZM720 96.5L716 94V99Z" fill="#2a62c0"/>
<rect x="709.500" y="81.500" width="8.500" height="7" fill="#d8e8f8" stroke="#6a8ab8" stroke-width="0.800"/>
<path d="M732.5 82V96.5H746M732.5 96.5L740 88" stroke="#2a62c0" stroke-width="1.300" fill="none"/><path d="M732.5 81L735 85H730ZM747 96.5L743 94V99Z" fill="#2a62c0"/>
<rect x="730.500" y="94.500" width="3" height="3" fill="#fff" stroke="#111" stroke-width="0.900"/>
<path d="M755.5 82V96.5H769M755.5 96.5L763 88" stroke="#2a62c0" stroke-width="1.300" fill="none"/><path d="M755.5 81L758 85H753ZM770 96.5L766 94V99Z" fill="#2a62c0"/>
<text x="769" y="88" font-size="8" font-weight="bold" fill="#111" text-anchor="middle">Z</text>
<g shape-rendering="crispEdges"><rect x="0" y="105" width="19" height="1" fill="#b4b4b4"/><rect x="0" y="106" width="19" height="1" fill="#fff"/><rect x="0" y="109" width="19" height="1" fill="#b4b4b4"/><rect x="0" y="110" width="19" height="1" fill="#fff"/><rect x="0" y="536" width="21" height="1" fill="#b4b4b4"/><rect x="0" y="537" width="21" height="1" fill="#fff"/></g>
<path d="M3.500 130L15.500 119" stroke="#111" stroke-width="1.200"/>
<rect x="2.0" y="128.5" width="3" height="3" fill="#2a62c0"/>
<rect x="14.0" y="117.5" width="3" height="3" fill="#2a62c0"/>
<path d="M2 153L15 141" stroke="#111" stroke-width="1.200"/><path d="M16.500 139.500L12 141L15 144Z" fill="#111"/><path d="M1 154L5.500 152.500L2.500 149.500Z" fill="#111"/>
<path d="M2 172H11Q17 172 15 166Q14 163 11 165" stroke="#111" stroke-width="1.200" fill="none"/>
<rect x="0.5" y="170.5" width="3" height="3" fill="#2a62c0"/>
<rect x="9.5" y="170.5" width="3" height="3" fill="#2a62c0"/>
<rect x="10.0" y="163.0" width="3" height="3" fill="#2a62c0"/>
<path d="M9 184.500L16 190L13.500 197.500H4.500L2 190Z" fill="#e4ecf8" stroke="#223" stroke-width="1.200"/>
<rect x="2.500" y="209.500" width="13" height="7.500" fill="#e4ecf8" stroke="#223" stroke-width="1.200"/>
<rect x="1.0" y="215.5" width="3" height="3" fill="#2a62c0"/>
<rect x="14.0" y="208.0" width="3" height="3" fill="#2a62c0"/>
<path d="M2.500 241Q3 230 15 228.500" stroke="#223" stroke-width="1.300" fill="none"/>
<rect x="1.0" y="239.5" width="3" height="3" fill="#2a62c0"/>
<rect x="14.0" y="227.0" width="3" height="3" fill="#2a62c0"/>
<rect x="4.5" y="230.5" width="3" height="3" fill="#2a62c0"/>
<circle cx="9" cy="257.500" r="7" fill="#e4ecf8" stroke="#223" stroke-width="1.200"/><path d="M9 257.500L13 253.500" stroke="#2a62c0" stroke-width="1.200"/>
<rect x="7.5" y="256.0" width="3" height="3" fill="#2a62c0"/>
<path d="M5 273Q2 276 4 279Q1 283 5 285Q8 288 11 285Q16 286 16 282Q18 278 14 276Q14 271 9 272Q7 271 5 273Z" fill="#e4ecf8" stroke="#223" stroke-width="1.200"/>
<path d="M2 307Q5 297 9 301Q13 305 16 295" stroke="#223" stroke-width="1.200" fill="none"/>
<ellipse cx="9" cy="322.500" rx="7" ry="4.500" fill="#e4ecf8" stroke="#223" stroke-width="1.200"/>
<rect x="0.5" y="321.0" width="3" height="3" fill="#2a62c0"/>
<rect x="14.5" y="321.0" width="3" height="3" fill="#2a62c0"/>
<rect x="7.5" y="316.5" width="3" height="3" fill="#2a62c0"/>
<path d="M9 350Q16 349 16 345Q15 340 8 340.500Q3 341 2.500 345" stroke="#223" stroke-width="1.200" fill="none"/>
<rect x="1.0" y="343.5" width="3" height="3" fill="#2a62c0"/>
<rect x="7.5" y="348.5" width="3" height="3" fill="#2a62c0"/>
<rect x="6.500" y="359.500" width="10" height="10" fill="#dce8f8" stroke="#6a8ab8" stroke-width="0.800"/><rect x="2.500" y="364.500" width="8" height="6" fill="#f0dc70" stroke="#2a52a0" stroke-width="1"/><circle cx="11" cy="371" r="3.500" fill="#f0dc70" stroke="#2a52a0" stroke-width="1"/><path d="M17 371V375H13Z" fill="#111"/>
<rect x="3.500" y="384.500" width="9" height="7" fill="#f0dc70" stroke="#2a52a0" stroke-width="1"/><circle cx="12" cy="392.500" r="3.700" fill="#f0dc70" stroke="#2a52a0" stroke-width="1"/>
<rect x="8" y="410" width="3" height="3" fill="#2a62c0"/>
<rect x="4.500" y="427.500" width="10" height="11" fill="#dce8f8" stroke="#2a62c0" stroke-width="0.800"/><path d="M5 433L10 428M5 438L14 429M9 438L14 433M5 429L7 431" stroke="#1c3c80" stroke-width="1"/><path d="M1.500 428H17M1.500 438H17M4.500 425V441M14.500 425V441" stroke="#2a52a0" stroke-width="1.100"/>
<defs><linearGradient id="gr" x1="0" y1="0" x2="1" y2="1"><stop offset="0" stop-color="#1c2c70"/><stop offset="1" stop-color="#e8d880"/></linearGradient></defs><rect x="4.500" y="449.500" width="10" height="11" fill="url(#gr)"/><path d="M1.500 450H17M1.500 460H17M4.500 447V463M14.500 447V463" stroke="#223" stroke-width="1.200"/><path d="M16 449L7 462" stroke="#223" stroke-width="1.200"/>
<path d="M2.500 471.500H12L16.500 476V483.500H2.500Z" fill="#dce8f8" stroke="#2a52a0" stroke-width="1.200"/><circle cx="9" cy="477.500" r="3" fill="#f8f8ff" stroke="#2a52a0" stroke-width="1"/>
<rect x="2.500" y="492.500" width="13" height="12" fill="#f4f8ff" stroke="#2a52a0" stroke-width="1"/><rect x="3" y="493" width="12" height="3" fill="#4a7ad0"/><path d="M3 499.500H15M3 502H15M7 496V504M11 496V504" stroke="#4a7ad0" stroke-width="0.900"/>
<text x="9" y="527" font-size="19" fill="#111" text-anchor="middle">A</text>
</svg>
<div id="menu"><div id="hl"></div><div class="i" style="top:3px;letter-spacing:-0.29px;color:#fff"><u>L</u>ayer...</div><div class="i" style="top:22px;letter-spacing:-0.18px;">L<u>a</u>yer tools</div><div class="i" style="top:42px;letter-spacing:0px;"><u>C</u>olor...</div><div class="i" style="top:62px;letter-spacing:-0.15px;">Li<u>n</u>etype...</div><div class="i" style="top:82px;letter-spacing:-0.06px;">Line<u>w</u>eight...</div><div class="i" style="top:102px;letter-spacing:-0.38px;">Scal<u>e</u> List...</div><div class="i" style="top:130.5px;letter-spacing:-0.23px;">Text <u>S</u>tyle...</div><div class="i" style="top:151px;letter-spacing:-0.15px;"><u>D</u>imension Style...</div><div class="i" style="top:171px;letter-spacing:-0.19px;">Ta<u>b</u>le Style...</div><div class="i dis" style="top:191px;letter-spacing:-0.2px;">Plot St<u>y</u>le...</div><div class="i" style="top:211px;letter-spacing:-0.15px;"><u>P</u>oint Style...</div><div class="i" style="top:231px;letter-spacing:0px;"><u>M</u>ultiline Style...</div><div class="i" style="top:260px;letter-spacing:-0.18px;"><u>U</u>nits...</div><div class="i" style="top:280px;letter-spacing:-0.22px;"><u>T</u>hickness</div><div class="i" style="top:300px;letter-spacing:0px;">Dr<u>a</u>wing Limits</div><div class="i" style="top:329px;letter-spacing:-0.4px;"><u>R</u>ename...</div><div class="sep" style="top:124px"></div><div class="sep" style="top:253px"></div><div class="sep" style="top:322px"></div></div>
<svg width="777" height="591" viewBox="0 0 777 591" style="pointer-events:none">
<path d="M173 33.0L180 29.5L189.5 33.0L182.5 36.5Z" fill="#aab6cc" stroke="#e4e8f0" stroke-width="0.600"/>
<path d="M173 29.3L180 25.8L189.5 29.3L182.5 32.8Z" fill="#bcc7da" stroke="#e4e8f0" stroke-width="0.600"/>
<path d="M173 25.5L180 22L189.5 25.5L182.5 29Z" fill="#b8c4d8" stroke="#e4e8f0" stroke-width="0.600"/>
<path d="M174.5 25.4L180 22.7L187 25.2" fill="none" stroke="#f4f7fb" stroke-width="0.800"/>
<text x="179.500" y="165" font-size="17.500" fill="#111" text-anchor="middle">A</text>
<path d="M189 157L186 161.5" stroke="#c8803c" stroke-width="2.200" stroke-linecap="round"/>
<path d="M186 161.5L184.9 163.1" stroke="#8a8a8a" stroke-width="2.400"/>
<path d="M183.6 162.3L186.4 164.0L181.2 166.9Z" fill="#1a1a1a"/>
<path d="M174.5 182.5V188.5M189.5 182.5V188.5M174 185.5H190" stroke="#111" stroke-width="1.200" fill="none"/><path d="M175 185.5L178 183.5V187.5ZM189 185.5L186 183.5V187.5Z" fill="#111"/>
<path d="M189.5 173L186 178.5" stroke="#c8803c" stroke-width="2.200" stroke-linecap="round"/>
<path d="M186 178.5L184.8 180.4" stroke="#8a8a8a" stroke-width="2.400"/>
<path d="M183.4 179.7L186.2 181.3L180.7 185.1Z" fill="#1a1a1a"/>
<rect x="174.500" y="196.500" width="13" height="10.500" fill="#e8eef8" stroke="#5a7ac0" stroke-width="1"/><rect x="175" y="197" width="12" height="3" fill="#4a7ad0"/><path d="M175 203.500H187M179 200V207M183 200V207" stroke="#6a8ad0" stroke-width="1"/>
<path d="M189.5 193L186 198.5" stroke="#c8803c" stroke-width="2.200" stroke-linecap="round"/>
<path d="M186 198.5L184.8 200.4" stroke="#8a8a8a" stroke-width="2.400"/>
<path d="M183.4 199.7L186.2 201.3L180.7 205.1Z" fill="#1a1a1a"/>
<path d="M174 309.500L184 304.500L190.500 307L180 312.500Z" fill="#3a5a88"/><path d="M174 309.500L180 312.500V315L174 312Z" fill="#a8b0bc"/><path d="M180 312.500L190.500 307V309.500L180 315Z" fill="#c8ccd4"/>
<path d="M325 46L329 49.500L325 53Z" fill="#111"/>
<ellipse cx="198.3" cy="9.3" rx="35.2" ry="12.6" fill="none" stroke="#e8141c" stroke-width="2.7"/>
<ellipse cx="219.2" cy="34.4" rx="32.6" ry="11.7" fill="none" stroke="#e8141c" stroke-width="2.7"/>
</svg>
</body></html>
